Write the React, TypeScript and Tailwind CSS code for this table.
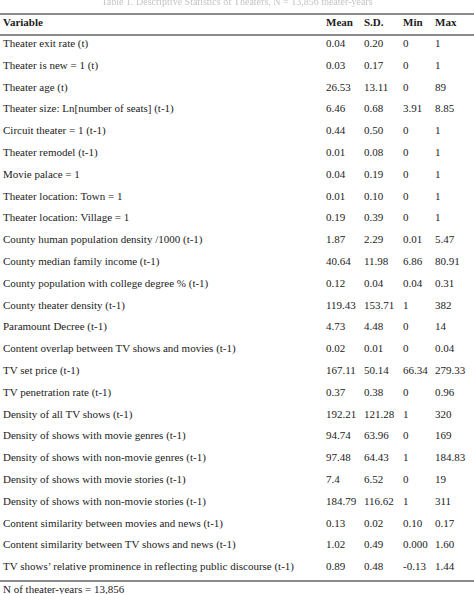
import React from "react";

const rows: [string, string, string, string, string][] = [
  ["Theater exit rate (t)", "0.04", "0.20", "0", "1"],
  ["Theater is new = 1 (t)", "0.03", "0.17", "0", "1"],
  ["Theater age (t)", "26.53", "13.11", "0", "89"],
  ["Theater size: Ln[number of seats] (t-1)", "6.46", "0.68", "3.91", "8.85"],
  ["Circuit theater = 1 (t-1)", "0.44", "0.50", "0", "1"],
  ["Theater remodel (t-1)", "0.01", "0.08", "0", "1"],
  ["Movie palace = 1", "0.04", "0.19", "0", "1"],
  ["Theater location: Town = 1", "0.01", "0.10", "0", "1"],
  ["Theater location: Village = 1", "0.19", "0.39", "0", "1"],
  ["County human population density /1000 (t-1)", "1.87", "2.29", "0.01", "5.47"],
  ["County median family income (t-1)", "40.64", "11.98", "6.86", "80.91"],
  ["County population with college degree % (t-1)", "0.12", "0.04", "0.04", "0.31"],
  ["County theater density (t-1)", "119.43", "153.71", "1", "382"],
  ["Paramount Decree (t-1)", "4.73", "4.48", "0", "14"],
  ["Content overlap between TV shows and movies (t-1)", "0.02", "0.01", "0", "0.04"],
  ["TV set price (t-1)", "167.11", "50.14", "66.34", "279.33"],
  ["TV penetration rate (t-1)", "0.37", "0.38", "0", "0.96"],
  ["Density of all TV shows (t-1)", "192.21", "121.28", "1", "320"],
  ["Density of shows with movie genres (t-1)", "94.74", "63.96", "0", "169"],
  ["Density of shows with non-movie genres (t-1)", "97.48", "64.43", "1", "184.83"],
  ["Density of shows with movie stories (t-1)", "7.4", "6.52", "0", "19"],
  ["Density of shows with non-movie stories (t-1)", "184.79", "116.62", "1", "311"],
  ["Content similarity between movies and news (t-1)", "0.13", "0.02", "0.10", "0.17"],
  ["Content similarity between TV shows and news (t-1)", "1.02", "0.49", "0.000", "1.60"],
  ["TV shows\u2019 relative prominence in reflecting public discourse (t-1)", "0.89", "0.48", "-0.13", "1.44"],
];

export default function App() {
  return (
    <div
      className="w-[474px] h-[594px] bg-white overflow-hidden text-[#1c1c1c] text-[11px]"
      style={{ fontFamily: '"Liberation Serif", "Times New Roman", serif' }}
    >
      <div className="h-[12.5px] overflow-hidden text-center">
        <div className="-mt-[3.5px] text-[10px] leading-[10px] text-[#c4c4c4] blur-[0.4px]">
          Table 1. Descriptive Statistics of Theaters, N = 13,856 theater-years
        </div>
      </div>
      <div className="h-[2px] bg-[#8a8a8a]" />
      <div className="grid grid-cols-[326px_38px_39px_32px_39px] h-[19px] pt-[1px] leading-[12px] font-bold">
        <div className="pl-[3px]">Variable</div>
        <div>Mean</div>
        <div>S.D.</div>
        <div>Min</div>
        <div>Max</div>
      </div>
      <div className="h-[2px] bg-[#8a8a8a]" />
      <div className="flex flex-col">
        {rows.map((r, i) => (
          <div
            key={i}
            className="grid grid-cols-[326px_38px_39px_32px_39px] h-[21.8px] pt-[1.5px] leading-[12px] whitespace-nowrap"
          >
            <div className="pl-[3px]">{r[0]}</div>
            <div>{r[1]}</div>
            <div>{r[2]}</div>
            <div>{r[3]}</div>
            <div>{r[4]}</div>
          </div>
        ))}
      </div>
      <div className="h-[2px] bg-[#8a8a8a]" />
      <div className="pl-[3px] pt-[1px] leading-[12px]">N of theater-years = 13,856</div>
    </div>
  );
}
